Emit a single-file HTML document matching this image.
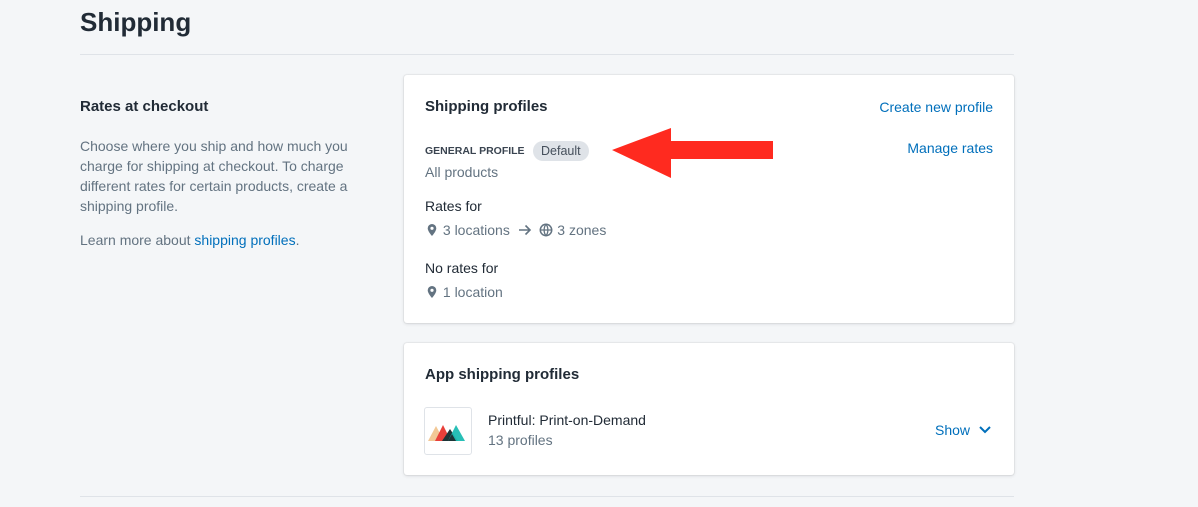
<!DOCTYPE html>
<html><head><style>
body{margin:0;width:1198px;height:507px;background:#f4f6f8;font-family:"Liberation Sans",sans-serif;position:relative;overflow:hidden;color:#212b36}
.a{position:absolute;white-space:nowrap}
.card{position:absolute;left:404px;width:610px;background:#fff;border-radius:3px;box-shadow:0 0 0 1px rgba(63,63,68,.05),0 1px 3px rgba(63,63,68,.15)}
.g{color:#637381}
.b{color:#006fbb}
.f14{font-size:14px}
</style></head><body>
<div class="a" style="left:80px;top:7px;font-size:26px;font-weight:bold">Shipping</div>
<div class="a" style="left:80px;top:54px;width:934px;height:1px;background:#dfe3e8"></div>
<div class="a" style="left:80px;top:496px;width:934px;height:1px;background:#dfe3e8"></div>
<div class="a" style="left:80px;top:98px;font-size:15px;font-weight:bold">Rates at checkout</div>
<div class="a g f14" style="left:80px;top:136px;line-height:20px">Choose where you ship and how much you<br>charge for shipping at checkout. To charge<br>different rates for certain products, create a<br>shipping profile.</div>
<div class="a g f14" style="left:80px;top:232px">Learn more about <span class="b">shipping profiles</span>.</div>

<div class="card" style="top:75px;height:248px">
<div class="a" style="left:21px;top:23px;font-size:15px;font-weight:bold">Shipping profiles</div>
<div class="a b f14" style="right:21px;top:24px">Create new profile</div>
<div class="a b f14" style="right:21px;top:65px">Manage rates</div>
<div class="a" style="left:21px;top:70px;font-size:10.5px;font-weight:bold;color:#3a4450">GENERAL PROFILE</div>
<div class="a" style="left:129px;top:66px;height:20px;line-height:20px;padding:0 8px;border-radius:10px;background:#dfe3e8;font-size:12.5px;color:#454f5b">Default</div>
<div class="a g f14" style="left:21px;top:89px">All products</div>
<div class="a f14" style="left:21px;top:123px">Rates for</div>
<div class="a g f14" style="left:21px;top:147px"><svg width="14" height="14" viewBox="0 0 14 14" style="vertical-align:-2px"><path d="M7 1a4.3 4.3 0 0 0-4.3 4.3C2.7 8.5 7 13 7 13s4.3-4.5 4.3-7.7A4.3 4.3 0 0 0 7 1z" fill="#637381"/><circle cx="7" cy="5.3" r="1.6" fill="#fff"/></svg> 3 locations &nbsp;<svg width="14" height="12" viewBox="0 0 14 12" style="vertical-align:-1px"><path d="M1 6h11M7.5 1.5L12 6l-4.5 4.5" fill="none" stroke="#637381" stroke-width="1.6"/></svg>&nbsp; <svg width="14" height="14" viewBox="0 0 14 14" style="vertical-align:-2px"><circle cx="7" cy="7" r="5.7" fill="none" stroke="#637381" stroke-width="1.5"/><path d="M1.5 7h11M7 1.3c-2.5 3-2.5 8.4 0 11.4M7 1.3c2.5 3 2.5 8.4 0 11.4" fill="none" stroke="#637381" stroke-width="1.3"/></svg> 3 zones</div>
<div class="a f14" style="left:21px;top:185px">No rates for</div>
<div class="a g f14" style="left:21px;top:209px"><svg width="14" height="14" viewBox="0 0 14 14" style="vertical-align:-2px"><path d="M7 1a4.3 4.3 0 0 0-4.3 4.3C2.7 8.5 7 13 7 13s4.3-4.5 4.3-7.7A4.3 4.3 0 0 0 7 1z" fill="#637381"/><circle cx="7" cy="5.3" r="1.6" fill="#fff"/></svg> 1 location</div>
</div>

<div class="card" style="top:343px;height:132px">
<div class="a" style="left:21px;top:23px;font-size:15px;font-weight:bold">App shipping profiles</div>
<div class="a" style="left:20px;top:64px;width:46px;height:46px;border:1px solid #dfe3e8;border-radius:3px">
<svg width="46" height="46" viewBox="0 0 46 46"><polygon points="3,33 11,18 19,33" fill="#f2c896"/><polygon points="10,33 18,17 26,33" fill="#e8403a"/><polygon points="17,33 25,21 33,33" fill="#1d3436"/><polygon points="23,33 31,17 40,33" fill="#1cbcb2" opacity=".95"/><polygon points="23,33 27,26 31,33" fill="#1d3436"/></svg></div>
<div class="a f14" style="left:84px;top:69px">Printful: Print-on-Demand</div>
<div class="a g f14" style="left:84px;top:89px">13 profiles</div>
<div class="a b f14" style="left:531px;top:79px">Show <svg width="14" height="10" viewBox="0 0 14 10" style="margin-left:4px"><path d="M2 2l5 5 5-5" fill="none" stroke="#006fbb" stroke-width="2"/></svg></div>
</div>

<svg class="a" style="left:610px;top:126px" width="166" height="54" viewBox="0 0 166 54"><polygon points="2,24 61,2 61,15 163,15 163,33 61,33 61,52" fill="#ff2a1f"/></svg>
</body></html>
